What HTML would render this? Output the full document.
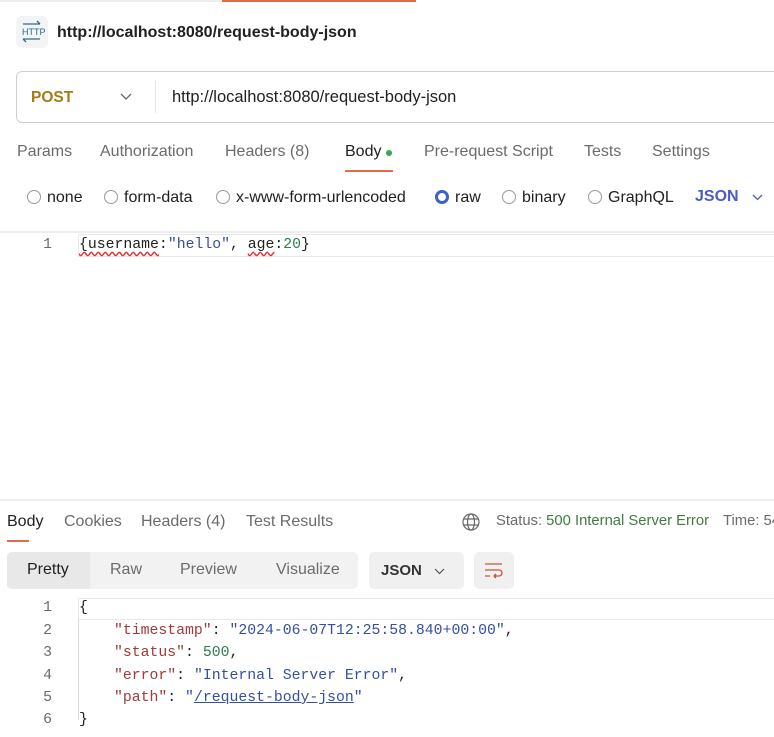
<!DOCTYPE html>
<html><head><meta charset="utf-8"><style>
*{margin:0;padding:0;box-sizing:border-box}
body{width:774px;height:737px;overflow:hidden;background:#fff;font-family:"Liberation Sans",sans-serif;color:#212121;position:relative}
.a{position:absolute;white-space:nowrap}
.t{font-size:16px;color:#6b6b6b}
.m{font-family:"Liberation Mono",monospace;font-size:14.8px}
.ln{color:#6b6b6b;width:20px;text-align:right}
.rl{font-size:16px;color:#212121}
.r{display:inline-block;width:14px;height:14px;border:1px solid #9a9a9a;border-radius:50%;vertical-align:-2px;margin-right:6px}
.k{color:#a13a3a}.s{color:#3550a0}.n{color:#2f7d52}
</style></head><body>
<div class="a" style="left:0;top:0;width:222px;height:2px;background:#eee"></div>
<div class="a" style="left:222px;top:0;width:194px;height:2px;background:#e06c4a"></div>
<div class="a" style="left:16px;top:16px;width:32px;height:32px;background:#f3f4f5;border-radius:6px"></div>
<svg class="a" style="left:18px;top:20px" width="28" height="24" viewBox="0 0 28 24"><path d="M5 4h17M19 1l3 3M5 19h17M5 19l3 3" stroke="#2b6b83" stroke-width="1.3" fill="none"/><text x="4" y="15" font-size="9" font-family="Liberation Sans" fill="#2b6b83">HTTP</text></svg>
<div class="a" style="left:57px;top:24px;font-size:16px;font-weight:bold;color:#212121">http://localhost:8080/request-body-json</div>
<div class="a" style="left:16px;top:71px;width:770px;height:52px;border:1px solid #cfcfcf;border-radius:6px"></div>
<div class="a" style="left:31px;top:89px;font-size:15.5px;font-weight:bold;color:#a57a12">POST</div>
<svg class="a" style="left:120px;top:93px" width="12" height="8"><path d="M1 1l5 5 5-5" stroke="#666" stroke-width="1.3" fill="none"/></svg>
<div class="a" style="left:155px;top:81px;width:1px;height:32px;background:#e4e4e4"></div>
<div class="a" style="left:172px;top:88px;font-size:16.5px;color:#212121">http://localhost:8080/request-body-json</div>
<div class="a t" style="left:17px;top:143px">Params</div>
<div class="a t" style="left:100px;top:143px">Authorization</div>
<div class="a t" style="left:225px;top:143px">Headers (8)</div>
<div class="a t" style="left:345px;top:143px;color:#212121">Body</div>
<div class="a" style="left:386px;top:150px;width:6px;height:6px;border-radius:50%;background:#3fa44f"></div>
<div class="a" style="left:345px;top:170px;width:48px;height:2px;background:#e06c4a"></div>
<div class="a t" style="left:424px;top:143px">Pre-request Script</div>
<div class="a t" style="left:584px;top:143px">Tests</div>
<div class="a t" style="left:652px;top:143px">Settings</div>
<div class="a rl" style="left:27px;top:189px"><span class="r"></span>none</div>
<div class="a rl" style="left:104px;top:189px"><span class="r"></span>form-data</div>
<div class="a rl" style="left:216px;top:189px"><span class="r"></span>x-www-form-urlencoded</div>
<div class="a rl" style="left:435px;top:189px"><span class="r" style="border:3.5px solid #3b5fd0"></span>raw</div>
<div class="a rl" style="left:502px;top:189px"><span class="r"></span>binary</div>
<div class="a rl" style="left:588px;top:189px"><span class="r"></span>GraphQL</div>
<div class="a" style="left:695px;top:188px;font-size:16px;font-weight:bold;color:#4a5bc8">JSON</div>
<svg class="a" style="left:752px;top:194px" width="11" height="7"><path d="M1 1l4.5 4.5L10 1" stroke="#4a5bc8" stroke-width="1.3" fill="none"/></svg>
<div class="a" style="left:0;top:231px;width:774px;height:2px;background:#eee"></div>
<div class="a" style="left:78px;top:234px;width:700px;height:23px;border:1px solid #e8e8e8;border-right:none"></div>
<div class="a m ln" style="left:32px;top:237px">1</div>
<div class="a m" style="left:79px;top:237px"><span style="text-decoration:underline wavy #d33;text-underline-offset:3px">{username</span>:<span class="s">"hello"</span>, <span style="text-decoration:underline wavy #d33;text-underline-offset:3px">age</span>:<span class="n">20</span>}</div>
<div class="a" style="left:0;top:499px;width:774px;height:2px;background:#eee"></div>
<div class="a t" style="left:7px;top:513px;color:#212121">Body</div>
<div class="a" style="left:7px;top:540px;width:22px;height:2px;background:#e06c4a"></div>
<div class="a t" style="left:64px;top:513px">Cookies</div>
<div class="a t" style="left:141px;top:513px">Headers (4)</div>
<div class="a t" style="left:246px;top:513px">Test Results</div>
<svg class="a" style="left:462px;top:513px" width="18" height="18" viewBox="0 0 18 18" fill="none" stroke="#666" stroke-width="1.2"><circle cx="9" cy="9" r="8"/><ellipse cx="9" cy="9" rx="3.5" ry="8"/><path d="M1.5 6h15M1.5 12h15"/></svg>
<div class="a" style="left:496px;top:513px;font-size:14.8px;color:#6b6b6b">Status: <span style="color:#3f7d3f">500 Internal Server Error</span></div>
<div class="a" style="left:723px;top:513px;font-size:14.8px;color:#6b6b6b">Time: 54</div>
<div class="a" style="left:7px;top:552px;width:351px;height:37px;background:#f2f2f2;border-radius:5px"></div>
<div class="a" style="left:7px;top:552px;width:83px;height:37px;background:#e8e8e8;border-radius:5px 0 0 5px"></div>
<div class="a t" style="left:27px;top:561px;color:#212121">Pretty</div>
<div class="a t" style="left:110px;top:561px">Raw</div>
<div class="a t" style="left:180px;top:561px">Preview</div>
<div class="a t" style="left:276px;top:561px">Visualize</div>
<div class="a" style="left:369px;top:552px;width:95px;height:37px;background:#f0f0f0;border-radius:5px"></div>
<div class="a" style="left:381px;top:562px;font-size:15px;font-weight:bold;color:#333">JSON</div>
<svg class="a" style="left:434px;top:568px" width="11" height="7"><path d="M1 1l4.5 4.5L10 1" stroke="#555" stroke-width="1.2" fill="none"/></svg>
<div class="a" style="left:474px;top:552px;width:40px;height:37px;background:#f0f0f0;border-radius:5px"></div>
<svg class="a" style="left:484px;top:562px" width="20" height="18" viewBox="0 0 20 18" fill="none" stroke="#c8553a" stroke-width="1.3"><path d="M1 2h17M1 8h14a3 3 0 0 1 0 6h-5M12 12l-2 2 2 2M1 14h5"/></svg>
<div class="a" style="left:78px;top:598px;width:700px;height:22px;border:1px solid #e8e8e8;border-right:none"></div>
<div class="a" style="left:78px;top:620px;width:1px;height:100px;background:#ddd"></div>
<div class="a m ln" style="left:32px;top:600px">1</div>
<div class="a m ln" style="left:32px;top:623px">2</div>
<div class="a m ln" style="left:32px;top:645px">3</div>
<div class="a m ln" style="left:32px;top:668px">4</div>
<div class="a m ln" style="left:32px;top:690px">5</div>
<div class="a m ln" style="left:32px;top:712px">6</div>
<div class="a m" style="left:79px;top:600px">{</div>
<div class="a m" style="left:114px;top:623px"><span class="k">"timestamp"</span>: <span class="s">"2024-06-07T12:25:58.840+00:00"</span>,</div>
<div class="a m" style="left:114px;top:645px"><span class="k">"status"</span>: <span class="n">500</span>,</div>
<div class="a m" style="left:114px;top:668px"><span class="k">"error"</span>: <span class="s">"Internal Server Error"</span>,</div>
<div class="a m" style="left:114px;top:690px"><span class="k">"path"</span>: <span class="s">"<u>/request-body-json</u>"</span></div>
<div class="a m" style="left:79px;top:712px">}</div>
</body></html>
